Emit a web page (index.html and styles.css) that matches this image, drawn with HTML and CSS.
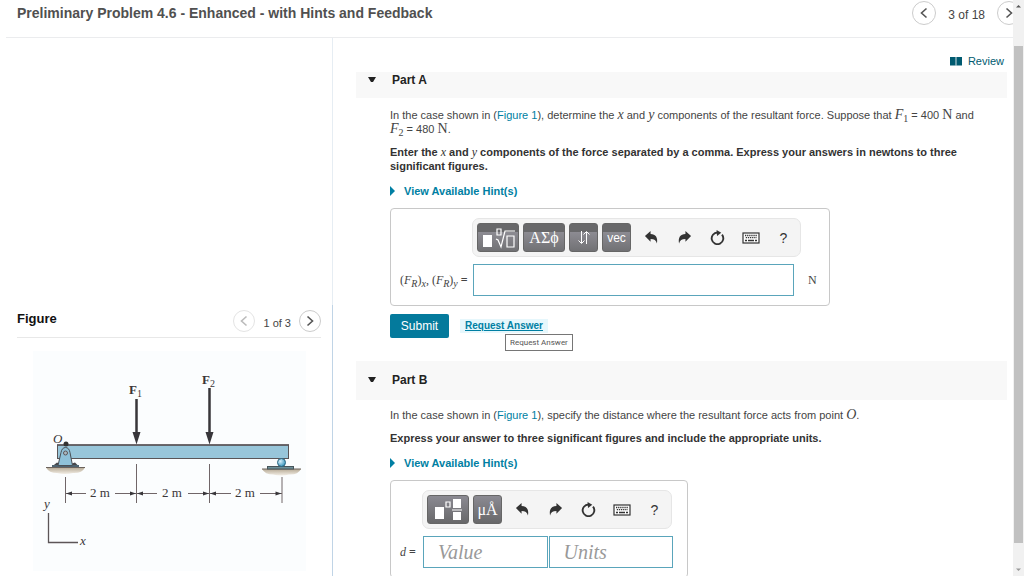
FILE: index.html
```
<!DOCTYPE html>
<html lang="en">
<head>
  <meta charset="UTF-8">
  <meta name="viewport" content="width=device-width, initial-scale=1.0">
  <title>Preliminary Problem 4.6</title>
  <link rel="stylesheet" href="styles.css">
</head>
<body>
  <!-- shared icons -->
  <svg class="sprite" aria-hidden="true">
    <symbol id="prev" viewBox="0 0 12 12"><path d="M8.5 1.5L3.5 6l5 4.5" fill="none" stroke="currentColor" stroke-width="1.6"/></symbol>
    <symbol id="next" viewBox="0 0 12 12"><path d="M3.5 1.5L8.5 6l-5 4.5" fill="none" stroke="currentColor" stroke-width="1.6"/></symbol>
    <symbol id="undo" viewBox="0 0 16 16"><path d="M1 6.5L7 1v3.2c5.5.2 8 3.8 6.8 10.3-.8-3.5-2.8-5-6.8-5v3z" fill="currentColor"/></symbol>
    <symbol id="redo" viewBox="0 0 16 16"><path d="M15 6.5L9 1v3.2C3.5 4.4 1 8 2.2 14.5c.8-3.5 2.8-5 6.8-5v3z" fill="currentColor"/></symbol>
    <symbol id="reset" viewBox="0 0 16 16"><path d="M8 2.7A6.2 6.2 0 1 0 12.8 5" fill="none" stroke="currentColor" stroke-width="2"/><path d="M7 0l5 3-4.5 3.4z" fill="currentColor"/></symbol>
    <symbol id="keyboard" viewBox="0 0 18 12"><rect x="1" y="1" width="16" height="10" fill="#fff" stroke="currentColor" stroke-width="1.2"/><path d="M3 3.5h12M3.8 5.7h11" stroke="currentColor" stroke-width="1.3" stroke-dasharray="1.3 .8"/><path d="M3 8.5h2M6 8.5h6M13 8.5h2" stroke="currentColor" stroke-width="1.3"/></symbol>
    <symbol id="hint" viewBox="0 0 6 10"><path d="M0 0l5 5-5 5z" fill="currentColor"/></symbol>
    <symbol id="caret" viewBox="0 0 10 6"><path d="M1 0h8L6 5H4z" fill="currentColor"/></symbol>
  </svg>

  <div class="page">
    <header class="header">
      <h1>Preliminary Problem 4.6 - Enhanced - with Hints and Feedback</h1>
      <nav class="pager pager-item">
        <button class="round" aria-label="Previous item"><svg><use href="#prev"/></svg></button>
        <span>3 of 18</span>
        <button class="round" aria-label="Next item"><svg><use href="#next"/></svg></button>
      </nav>
    </header>

    <div class="columns">
      <aside class="left">
        <div class="left-top"></div>
        <section class="figure">
          <div class="figure-head">
            <h2>Figure</h2>
            <div class="pager">
              <button class="round" aria-label="Previous figure" disabled><svg><use href="#prev"/></svg></button>
              <span>1 of 3</span>
              <button class="round" aria-label="Next figure"><svg><use href="#next"/></svg></button>
            </div>
          </div>
          <svg class="diagram" viewBox="33 351 273 220" role="img" aria-label="Beam with two forces">
            <defs>
              <linearGradient id="ground" x1="0" y1="0" x2="0" y2="1">
                <stop offset="0" stop-color="#b5a994"/>
                <stop offset="1" stop-color="#f3eee6"/>
              </linearGradient>
              <radialGradient id="ball" cx=".35" cy=".35" r=".7">
                <stop offset="0" stop-color="#d8f0fa"/>
                <stop offset="1" stop-color="#3392bb"/>
              </radialGradient>
            </defs>
            <path d="M46 467.5h39q-3 6-12 5.5-8 2-16 0-8 0-11-5.5z" fill="url(#ground)"/>
            <path d="M262 469h39q-3 6-12 5.5-8 2-16 0-8 0-11-5.5z" fill="url(#ground)"/>
            <path d="M46 467.5h39M262 469h39" stroke="#6b625c"/>
            <rect x="57.5" y="445" width="231" height="13.5" fill="#98c6da" stroke="#5a5557"/>
            <path d="M57 445h232" stroke="#5a5557" stroke-width="1.5"/>
            <!-- pin support -->
            <path d="M52 466.5l5-4 2 1v3zM79 466.5l-4-4-3 1v3z" fill="#45464a"/>
            <path d="M52 465h27v2H52z" fill="#4e6370"/>
            <path d="M58 465.5l3-13q1-5 4.5-5t4.5 5l2.5 13z" fill="#8fc1d8" stroke="#4a5056"/>
            <circle cx="65.5" cy="453" r="2" fill="#a9b8c0" stroke="#5d5557"/>
            <circle cx="66" cy="444" r="2.5" fill="#333"/>
            <!-- roller -->
            <rect x="267.5" y="466.5" width="26" height="2.5" fill="#6e9199" stroke="#48555b"/>
            <circle cx="281.5" cy="462.5" r="4" fill="url(#ball)" stroke="#2c6681"/>
            <!-- forces -->
            <path d="M136.5 399v36M209.5 388v47" stroke="#38363a" stroke-width="2.5"/>
            <path d="M132.5 432h8l-4 12.5zM205.5 432h8l-4 12.5z" fill="#38363a"/>
            <!-- dimensions -->
            <path d="M65.5 477v26M136.5 464v39M209.5 464v39M282 477v26M66 493.5h20M115 493.5h42M188 493.5h43M260 493.5h22" fill="none" stroke="#706668"/>
            <path d="M66 493.5l6-2v4zM136 493.5l-6-2v4zM137 493.5l6-2v4zM209 493.5l-6-2v4zM210 493.5l6-2v4zM281.5 493.5l-6-2v4z" fill="#38363a"/>
            <path d="M48.5 513v29.5H78" fill="none" stroke="#5c5557" stroke-width="1.3"/>
            <g class="diagram-text">
              <text x="129" y="394" class="force">F</text><text x="137" y="397" class="sub">1</text>
              <text x="202" y="384" class="force">F</text><text x="210" y="387" class="sub">2</text>
              <text x="53" y="443" class="axis">O</text>
              <text x="90" y="497">2 m</text>
              <text x="162" y="497">2 m</text>
              <text x="235" y="497">2 m</text>
              <text x="44" y="508" class="axis">y</text>
              <text x="80" y="545" class="axis">x</text>
            </g>
          </svg>
        </section>
      </aside>

      <main class="right">
        <a class="review" href="#"><svg viewBox="0 0 12 9"><path d="M0 0h5.6v8.4H0zM6.4 0H12v8.4H6.4z" fill="currentColor"/><path d="M6 .5v8.5" stroke="#6fa3b0" stroke-width=".6"/></svg>Review</a>

        <section class="part">
          <h2 class="part-head part-head-first"><button class="toggle"><svg><use href="#caret"/></svg>Part A</button></h2>
          <div class="part-body">
            <p>In the case shown in (<a href="#">Figure 1</a>), determine the <i class="math">x</i> and <i class="math">y</i> components of the resultant force. Suppose that <span class="nowrap"><i class="math">F</i><sub>1</sub> = 400 <span class="math">N</span></span> and <span class="nowrap"><i class="math">F</i><sub>2</sub> = 480 <span class="math">N</span>.</span></p>
            <p class="instructions">Enter the <i class="math">x</i> and <i class="math">y</i> components of the force separated by a comma. Express your answers in newtons to three significant figures.</p>
            <a class="hints" href="#"><svg><use href="#hint"/></svg>View Available Hint(s)</a>

            <div class="answer answer-a">
              <div class="toolbar">
                <button class="tool wide" aria-label="Templates"><svg width="34" height="22" viewBox="0 0 34 22"><path d="M2 8h9v12H2z" fill="#fff"/><path d="M15 12l2 1 3 7 4-16h10M16 2h4v6h-4zM26 9h7v11h-7z" fill="none" stroke="#fff" stroke-width="1.2"/></svg></button>
                <button class="tool wide serif">ΑΣϕ</button>
                <button class="tool" aria-label="Arrows"><svg width="14" height="16" viewBox="0 0 14 16"><path d="M4.5 1v12M1.5 10.5l3 3 3-3M9.5 14V2M6.5 4.5l3-3 3 3" fill="none" stroke="#fff"/></svg></button>
                <button class="tool vec">vec</button>
                <div class="tool-icons">
                  <button aria-label="Undo"><svg><use href="#undo"/></svg></button>
                  <button aria-label="Redo"><svg><use href="#redo"/></svg></button>
                  <button aria-label="Reset"><svg><use href="#reset"/></svg></button>
                  <button aria-label="Keyboard"><svg class="kbd"><use href="#keyboard"/></svg></button>
                  <button>?</button>
                </div>
              </div>
              <label for="force">(<i>F<sub>R</sub></i>)<i><sub>x</sub></i>, (<i>F<sub>R</sub></i>)<i><sub>y</sub></i> <b>=</b></label>
              <input id="force" type="text">
              <span class="unit">N</span>
            </div>

            <div class="actions">
              <button class="submit">Submit</button>
              <a class="request" href="#">Request Answer<span class="tooltip">Request Answer</span></a>
            </div>
          </div>
        </section>

        <section class="part">
          <h2 class="part-head"><button class="toggle"><svg><use href="#caret"/></svg>Part B</button></h2>
          <div class="part-body">
            <p>In the case shown in (<a href="#">Figure 1</a>), specify the distance where the resultant force acts from point <i class="math">O</i>.</p>
            <p class="instructions">Express your answer to three significant figures and include the appropriate units.</p>
            <a class="hints" href="#"><svg><use href="#hint"/></svg>View Available Hint(s)</a>

            <div class="answer answer-b">
              <div class="toolbar">
                <button class="tool wide" aria-label="Templates"><svg width="28" height="22" viewBox="0 0 28 22"><path d="M1 8h9v12H1zM19 0h8v9h-8zM19 13h8v8h-8z" fill="#fff"/><path d="M12 3h4v5h-4zM18 11h10" fill="none" stroke="#fff" stroke-width="1.2"/></svg></button>
                <button class="tool serif">μÅ</button>
                <div class="tool-icons">
                  <button aria-label="Undo"><svg><use href="#undo"/></svg></button>
                  <button aria-label="Redo"><svg><use href="#redo"/></svg></button>
                  <button aria-label="Reset"><svg><use href="#reset"/></svg></button>
                  <button aria-label="Keyboard"><svg class="kbd"><use href="#keyboard"/></svg></button>
                  <button>?</button>
                </div>
              </div>
              <label for="value"><i>d</i> <b>=</b></label>
              <div class="pair">
                <input id="value" type="text" placeholder="Value">
                <input type="text" placeholder="Units" aria-label="Units">
              </div>
            </div>
          </div>
        </section>
      </main>
    </div>
  </div>

  <div class="scrollbar" aria-hidden="true">
    <svg viewBox="0 0 11 6"><path d="M3 4.5L5.5 2 8 4.5z" fill="#555"/></svg>
    <div class="thumb"></div>
    <svg viewBox="0 0 11 6"><path d="M3 1.5L5.5 4 8 1.5z" fill="#999"/></svg>
  </div>
</body>
</html>
```
FILE: styles.css
```
* {
  box-sizing: border-box;
}

body {
  margin: 0;
  height: 100vh;
  display: flex;
  overflow: hidden;
  font-family: "Liberation Sans", Arial, sans-serif;
  font-size: 11px;
  line-height: 14px;
  color: #444;
  background: #fff;
}

h1, h2, p {
  margin: 0;
}

a {
  color: #007fa3;
  text-decoration: none;
}

button {
  font: inherit;
  color: inherit;
  padding: 0;
  border: 0;
  background: none;
}

.sprite {
  position: absolute;
  width: 0;
  height: 0;
}

.page {
  flex: 1;
  min-width: 0;
  display: flex;
  flex-direction: column;
  overflow: hidden;
}

/* header */
.header {
  flex: none;
  display: flex;
  justify-content: space-between;
  height: 38px;
  margin-left: 6px;
  padding-left: 11px;
  border-bottom: 1px solid #ebecee;
}

.header h1 {
  font-size: 14px;
  line-height: 26px;
  color: #505050;
}

.pager {
  display: flex;
  align-items: center;
  gap: 8px;
}

.pager span {
  padding-top: 3px;
}

.pager-item {
  height: 26px;
  gap: 12px;
  margin-right: -8px;
  font-size: 12px;
}

.round {
  display: flex;
  align-items: center;
  justify-content: center;
  width: 24px;
  height: 24px;
  color: #555;
  border: 1px solid #ccc;
  border-radius: 50%;
}

.round svg {
  width: 12px;
  height: 12px;
}

.round:disabled {
  color: #bbb;
  border-color: #e4e4e4;
}

.columns {
  flex: 1;
  min-height: 0;
  display: flex;
}

/* figure pane */
.left {
  flex: none;
  width: 333px;
  display: flex;
  flex-direction: column;
}

.left-top {
  flex: 1;
  border-right: 1px solid #e6edf3;
}

.figure {
  padding: 4px 11px 5px 17px;
  border-right: 1px solid #c0d4e6;
}

.figure-head {
  display: flex;
  justify-content: space-between;
  height: 29px;
  margin-bottom: 13px;
  border-bottom: 1px solid #e8e8e8;
}

.figure-head h2 {
  font-size: 13px;
  line-height: 20px;
  color: #111;
}

.figure-head .pager {
  height: 24px;
}

.figure-head .round {
  width: 22px;
  height: 22px;
}

.diagram {
  display: block;
  width: 273px;
  height: 220px;
  margin-left: 16px;
  background: #fbfdfe;
}

.diagram-text {
  font-family: "Liberation Serif", serif;
  font-size: 13px;
  fill: #3a3638;
}

.force {
  font-weight: bold;
}

.sub {
  font-size: 10px;
}

.axis {
  font-style: italic;
}

/* problem pane */
.right {
  flex: 1;
  min-width: 0;
  padding: 16px 6px 0 23px;
}

.review {
  display: flex;
  align-items: center;
  justify-content: flex-end;
  gap: 6px;
  margin: 0 3px 4px 0;
  color: #005a70;
}

.review svg {
  width: 12px;
  height: 9px;
}

.part-head {
  height: 39px;
  padding: 12px 11px;
  background: #f8f8f8;
}

.part-head-first {
  height: 26px;
  padding-top: 1px;
}

.toggle {
  display: flex;
  align-items: center;
  gap: 15px;
  font-size: 12px;
  font-weight: bold;
  color: #222;
}

.toggle svg {
  width: 10px;
  height: 6px;
}

.part-body {
  padding: 8px 0 23px 34px;
}

.part-head-first + .part-body {
  padding-top: 10px;
}

.part-body p {
  margin-bottom: 9px;
}

.nowrap {
  white-space: nowrap;
}

.math {
  font-family: "Liberation Serif", serif;
  font-size: 14px;
  font-weight: normal;
  line-height: 0;
}

sub {
  font-family: "Liberation Serif", serif;
  font-size: 10px;
  line-height: 0;
  vertical-align: -3px;
}

.instructions {
  font-weight: bold;
  color: #333;
}

.instructions .math {
  font-size: 12px;
}

.hints {
  display: flex;
  align-items: center;
  gap: 8px;
  margin: 11px 0 10px;
  font-weight: bold;
}

.hints svg {
  width: 6px;
  height: 10px;
}

.answer {
  display: grid;
  row-gap: 7px;
  padding: 9px;
  border: 1px solid #c8c8c8;
  border-radius: 4px;
  align-items: center;
}

.answer-a {
  grid-template-columns: 73px 321px auto;
  max-width: 440px;
}

.answer-b {
  grid-template-columns: 23px 250px;
  width: 298px;
}

.toolbar {
  grid-column: 2 / -1;
  justify-self: start;
  display: flex;
  align-items: center;
  gap: 4px;
  height: 39px;
  margin-left: -1px;
  padding: 4px 2px 4px 4px;
  border: 1px solid #e6e6e6;
  border-radius: 7px;
  background: #f4f4f4;
}

.tool {
  display: flex;
  align-items: center;
  justify-content: center;
  width: 29px;
  height: 29px;
  color: #fff;
  border: 1px solid #666;
  border-radius: 3px;
  background: linear-gradient(#68686a 30%, #8c8b92 31%, #717174);
}

.answer-b .tool {
  background: linear-gradient(#8b8a92, #68686a);
}

.wide {
  width: 42px;
}

.serif {
  font-family: "Liberation Serif", serif;
  font-size: 16px;
}

.vec {
  font-size: 12px;
}

.tool-icons {
  display: flex;
  gap: 4px;
  margin-left: 2px;
}

.tool-icons button {
  display: flex;
  align-items: center;
  justify-content: center;
  width: 29px;
  height: 29px;
  font-size: 14px;
  color: #333;
}

.tool-icons svg {
  width: 15px;
  height: 15px;
}

.tool-icons .kbd {
  width: 18px;
  height: 12px;
}

.answer label {
  font-family: "Liberation Serif", serif;
  font-size: 12px;
  white-space: nowrap;
}

.answer input {
  width: 100%;
  min-width: 0;
  height: 32px;
  padding: 0 14px;
  border: 1px solid #5aa5bb;
  font-family: "Liberation Serif", serif;
  font-size: 20px;
}

.answer input::placeholder {
  font-style: italic;
  color: #999;
}

.unit {
  padding-left: 14px;
  font-family: "Liberation Serif", serif;
  font-size: 12px;
}

.pair {
  display: flex;
  gap: 1px;
}

.actions {
  display: flex;
  align-items: center;
  gap: 11px;
  margin-top: 8px;
}

.submit {
  width: 59px;
  height: 24px;
  font-size: 12px;
  color: #fff;
  border-radius: 2px;
  background: #047a9c;
}

.request {
  position: relative;
  padding: 0 5px;
  font-size: 10px;
  font-weight: bold;
  text-decoration: underline;
  background: #e6f7fc;
}

.tooltip {
  position: absolute;
  top: 15px;
  left: 45px;
  padding: 0 4px;
  font: 8px/15px Roboto, sans-serif;
  white-space: nowrap;
  color: #555;
  border: 1px solid #767676;
  background: #fff;
}

/* scrollbar */
.scrollbar {
  flex: none;
  display: flex;
  flex-direction: column;
  width: 11px;
  padding: 3px 0;
  background: #f1f1f1;
}

.scrollbar svg {
  width: 11px;
  height: 6px;
}

.thumb {
  flex: 1;
  margin: 37px 1px 24px;
  background: #c1c1c1;
}
```
